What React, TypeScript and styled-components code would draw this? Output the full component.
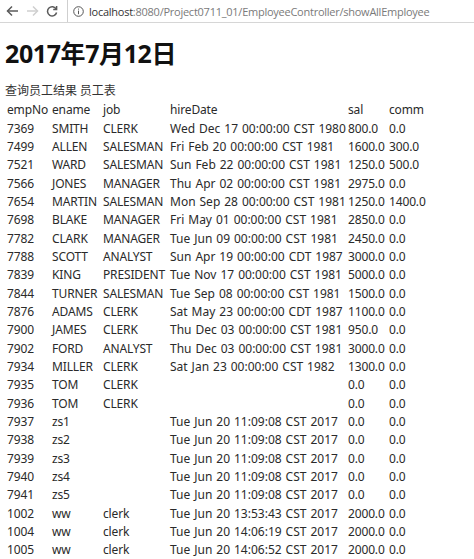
import React from "react";
import styled, { createGlobalStyle } from "styled-components";

const Global = createGlobalStyle`
  html, body { margin: 0; padding: 0; background: #fff; }
  body { font-family: "Noto Sans", "Noto Sans CJK SC", sans-serif; color: #222; }
`;

const Chrome = styled.div`
  height: 22px;
  border-bottom: 1px solid #d6d6d6;
  display: flex;
  align-items: center;
  background: #fff;
`;

const NavBtn = styled.span<{ $dim?: boolean }>`
  width: 20px;
  height: 20px;
  display: flex;
  align-items: center;
  justify-content: center;
  color: ${(p) => (p.$dim ? "#cfcfcf" : "#5a5a5a")};
`;

const NavGroup = styled.div`
  display: flex;
  align-items: center;
  padding-left: 2px;
  width: 65px;
`;

const Address = styled.div`
  flex: 1;
  height: 22px;
  border-left: 1px solid #cfcfcf;
  display: flex;
  align-items: center;
  gap: 5px;
  padding-left: 5px;
  font-family: "Open Sans", "Noto Sans", sans-serif;
  font-size: 11px;
  letter-spacing: -0.25px;
  color: #7a7a7a;
  white-space: nowrap;
  overflow: hidden;
`;

const Host = styled.span`
  color: #333;
`;

const Page = styled.div`
  padding: 0 0 0 5px;
`;

const Heading = styled.h1`
  margin: 15px 0 0 0;
  font-family: "Noto Sans", "Noto Sans CJK SC", sans-serif;
  font-size: 25px;
  font-weight: 700;
  line-height: 30px;
  color: #111;
  letter-spacing: -0.4px;
`;

const Caption = styled.div`
  margin-top: 14px;
  font-family: "Noto Sans CJK SC", sans-serif;
  font-size: 12px;
  line-height: 16px;
  color: #333;
`;

const Table = styled.table`
  border-collapse: collapse;
  border-spacing: 0;
  margin: 3px 0 0 2px;
  table-layout: fixed;
  width: 442px;
  font-family: "Noto Sans", sans-serif;
  font-size: 12px;
  color: #2a2a2a;
`;

const Row = styled.tr`
  height: 18.35px;
`;

const Cell = styled.td<{ $w: number; $wide?: boolean }>`
  width: ${(p) => p.$w}px;
  padding: 0;
  white-space: nowrap;
  overflow: visible;
  line-height: 18px;
  vertical-align: middle;
  letter-spacing: ${(p) => (p.$wide ? "0" : "-0.15px")};
  word-spacing: ${(p) => (p.$wide ? "0.85px" : "0")};
`;

const widths = [45, 51, 67, 178, 41, 60];

const header = ["empNo", "ename", "job", "hireDate", "sal", "comm"];

const rows: string[][] = [
  ["7369", "SMITH", "CLERK", "Wed Dec 17 00:00:00 CST 1980", "800.0", "0.0"],
  ["7499", "ALLEN", "SALESMAN", "Fri Feb 20 00:00:00 CST 1981", "1600.0", "300.0"],
  ["7521", "WARD", "SALESMAN", "Sun Feb 22 00:00:00 CST 1981", "1250.0", "500.0"],
  ["7566", "JONES", "MANAGER", "Thu Apr 02 00:00:00 CST 1981", "2975.0", "0.0"],
  ["7654", "MARTIN", "SALESMAN", "Mon Sep 28 00:00:00 CST 1981", "1250.0", "1400.0"],
  ["7698", "BLAKE", "MANAGER", "Fri May 01 00:00:00 CST 1981", "2850.0", "0.0"],
  ["7782", "CLARK", "MANAGER", "Tue Jun 09 00:00:00 CST 1981", "2450.0", "0.0"],
  ["7788", "SCOTT", "ANALYST", "Sun Apr 19 00:00:00 CDT 1987", "3000.0", "0.0"],
  ["7839", "KING", "PRESIDENT", "Tue Nov 17 00:00:00 CST 1981", "5000.0", "0.0"],
  ["7844", "TURNER", "SALESMAN", "Tue Sep 08 00:00:00 CST 1981", "1500.0", "0.0"],
  ["7876", "ADAMS", "CLERK", "Sat May 23 00:00:00 CDT 1987", "1100.0", "0.0"],
  ["7900", "JAMES", "CLERK", "Thu Dec 03 00:00:00 CST 1981", "950.0", "0.0"],
  ["7902", "FORD", "ANALYST", "Thu Dec 03 00:00:00 CST 1981", "3000.0", "0.0"],
  ["7934", "MILLER", "CLERK", "Sat Jan 23 00:00:00 CST 1982", "1300.0", "0.0"],
  ["7935", "TOM", "CLERK", "", "0.0", "0.0"],
  ["7936", "TOM", "CLERK", "", "0.0", "0.0"],
  ["7937", "zs1", "", "Tue Jun 20 11:09:08 CST 2017", "0.0", "0.0"],
  ["7938", "zs2", "", "Tue Jun 20 11:09:08 CST 2017", "0.0", "0.0"],
  ["7939", "zs3", "", "Tue Jun 20 11:09:08 CST 2017", "0.0", "0.0"],
  ["7940", "zs4", "", "Tue Jun 20 11:09:08 CST 2017", "0.0", "0.0"],
  ["7941", "zs5", "", "Tue Jun 20 11:09:08 CST 2017", "0.0", "0.0"],
  ["1002", "ww", "clerk", "Tue Jun 20 13:53:43 CST 2017", "2000.0", "0.0"],
  ["1004", "ww", "clerk", "Tue Jun 20 14:06:19 CST 2017", "2000.0", "0.0"],
  ["1005", "ww", "clerk", "Tue Jun 20 14:06:52 CST 2017", "2000.0", "0.0"],
];

const Arrow = ({ dir }: { dir: "left" | "right" }) => (
  <svg width="13" height="12" viewBox="0 0 13 12" fill="none" stroke="currentColor" strokeWidth="1.5">
    {dir === "left" ? (
      <>
        <path d="M12 6H1.5" />
        <path d="M6 1.5L1.5 6L6 10.5" />
      </>
    ) : (
      <>
        <path d="M1 6h10.5" />
        <path d="M7 1.5L11.5 6L7 10.5" />
      </>
    )}
  </svg>
);

const Reload = () => (
  <svg width="12" height="12" viewBox="0 0 12 12" fill="none" stroke="currentColor" strokeWidth="1.5">
    <path d="M10.2 4.2A4.6 4.6 0 1 0 10.6 7.5" />
    <path d="M10.6 1v3.4H7.2" />
  </svg>
);

const Info = () => (
  <svg width="11" height="11" viewBox="0 0 11 11" fill="none" stroke="#555" strokeWidth="1">
    <circle cx="5.5" cy="5.5" r="4.8" />
    <path d="M5.5 4.6v3.6" />
    <path d="M5.5 2.6v1" />
  </svg>
);

export default function App() {
  return (
    <>
      <Global />
      <Chrome>
        <NavGroup>
          <NavBtn>
            <Arrow dir="left" />
          </NavBtn>
          <NavBtn $dim>
            <Arrow dir="right" />
          </NavBtn>
          <NavBtn>
            <Reload />
          </NavBtn>
        </NavGroup>
        <Address>
          <Info />
          <span>
            <Host>localhost</Host>:8080/Project0711_01/EmployeeController/showAllEmployee
          </span>
        </Address>
      </Chrome>
      <Page>
        <Heading>2017年7月12日</Heading>
        <Caption>查询员工结果 员工表</Caption>
        <Table>
          <tbody>
            <Row>
              {header.map((h, i) => (
                <Cell key={h} $w={widths[i]}>
                  {h}
                </Cell>
              ))}
            </Row>
            {rows.map((r) => (
              <Row key={r[0]}>
                {r.map((c, i) => (
                  <Cell key={i} $w={widths[i]} $wide={i === 3}>
                    {c}
                  </Cell>
                ))}
              </Row>
            ))}
          </tbody>
        </Table>
      </Page>
    </>
  );
}
